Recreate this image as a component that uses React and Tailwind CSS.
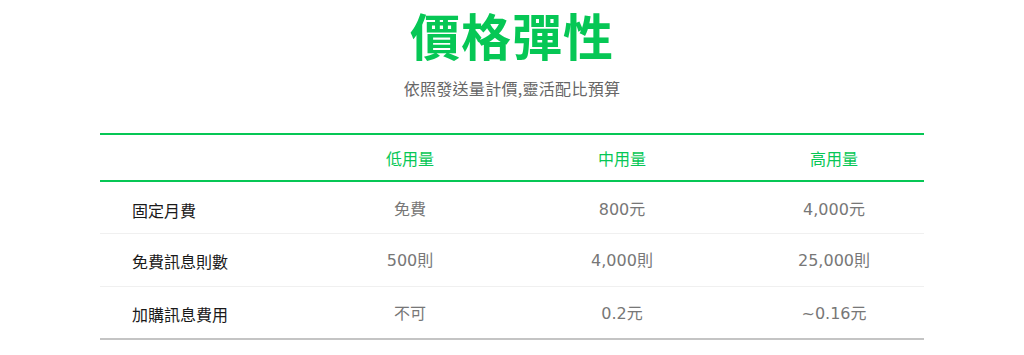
export default function App() {
  const rows = [
    ["固定月費", "免費", "800元", "4,000元"],
    ["免費訊息則數", "500則", "4,000則", "25,000則"],
    ["加購訊息費用", "不可", "0.2元", "~0.16元"],
  ];
  const font = { fontFamily: '"Noto Sans CJK TC", "Noto Sans", sans-serif' };
  const rowCls = [
    "h-[52px] border-b border-[#f0f0f0] pt-[5px]",
    "h-[53px] border-b border-[#f0f0f0] pt-[2px]",
    "h-[53px] border-b-2 border-[#c4c4c4] pt-[2px]",
  ];
  return (
    <div className="w-[1024px] min-h-[355px] bg-white pt-[2px]" style={font}>
      <div className="flex flex-col items-center">
        <h1 className="text-[50px] leading-[64px] font-bold text-[#06c755] tracking-[1px]">價格彈性</h1>
        <p className="mt-[12px] text-[16px] leading-[20px] text-[#666] tracking-[0.3px]">依照發送量計價,靈活配比預算</p>
      </div>
      <div className="mx-[100px] mt-[35px] border-t-2 border-[#06c755]">
        <div className="grid grid-cols-[204px_212px_212px_196px] h-[47px] items-center border-b-2 border-[#06c755] text-[16px] text-[#06c755]">
          <div></div>
          <div className="text-center">低用量</div>
          <div className="text-center">中用量</div>
          <div className="text-center pl-4">高用量</div>
        </div>
        {rows.map((r, i) => (
          <div
            key={i}
            className={"grid grid-cols-[204px_212px_212px_196px] items-center text-[16px] " + rowCls[i]}
          >
            <div className="pl-8 text-[#1a1a1a]">{r[0]}</div>
            <div className="text-center text-[#777] font-['DejaVu_Sans','Noto_Sans_CJK_TC',sans-serif]">{r[1]}</div>
            <div className="text-center text-[#777] font-['DejaVu_Sans','Noto_Sans_CJK_TC',sans-serif]">{r[2]}</div>
            <div className="text-center pl-4 text-[#777] font-['DejaVu_Sans','Noto_Sans_CJK_TC',sans-serif]">{r[3]}</div>
          </div>
        ))}
      </div>
    </div>
  );
}
